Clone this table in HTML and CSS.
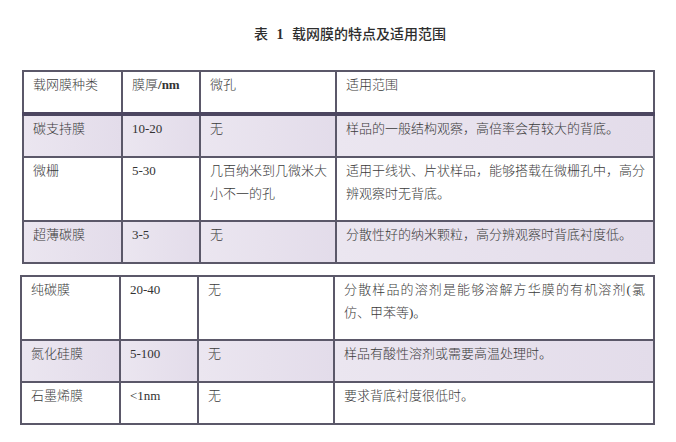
FILE: index.html
```html
<!DOCTYPE html>
<html lang="zh-CN">
<head>
<meta charset="utf-8">
<title>表 1 载网膜的特点及适用范围</title>
<link rel="stylesheet" href="styles.css">
</head>
<body>
<div class="page">
  <h1 class="title">表 <b class="num">1</b> 载网膜的特点及适用范围</h1>

  <table class="grid grid-a">
    <colgroup><col class="c1"><col class="c2"><col class="c3"><col class="c4"></colgroup>
    <tr class="head">
      <td>载网膜种类</td>
      <td>膜厚<b class="lat">/nm</b></td>
      <td>微孔</td>
      <td>适用范围</td>
    </tr>
    <tr class="shade r42">
      <td>碳支持膜</td>
      <td class="lat">10-20</td>
      <td>无</td>
      <td>样品的一般结构观察，高倍率会有较大的背底。</td>
    </tr>
    <tr class="r65">
      <td>微栅</td>
      <td class="lat">5-30</td>
      <td>几百纳米到几微米大<br>小不一的孔</td>
      <td>适用于线状、片状样品，能够搭载在微栅孔中，高分<br>辨观察时无背底。</td>
    </tr>
    <tr class="shade r42">
      <td>超薄碳膜</td>
      <td class="lat">3-5</td>
      <td>无</td>
      <td>分散性好的纳米颗粒，高分辨观察时背底衬度低。</td>
    </tr>
  </table>

  <table class="grid grid-b">
    <colgroup><col class="c1"><col class="c2"><col class="c3"><col class="c4"></colgroup>
    <tr class="r65">
      <td>纯碳膜</td>
      <td class="lat">20-40</td>
      <td>无</td>
      <td><span class="jline">分散样品的溶剂是能够溶解方华膜的有机溶剂(氯</span>仿、甲苯等)。</td>
    </tr>
    <tr class="shade r42">
      <td>氮化硅膜</td>
      <td class="lat">5-100</td>
      <td>无</td>
      <td>样品有酸性溶剂或需要高温处理时。</td>
    </tr>
    <tr class="r42">
      <td>石墨烯膜</td>
      <td class="lat">&lt;1nm</td>
      <td>无</td>
      <td>要求背底衬度很低时。</td>
    </tr>
  </table>
</div>
</body>
</html>
```

FILE: styles.css
```css
html, body {
  margin: 0;
  padding: 0;
  background: #ffffff;
}

body {
  font-family: "Liberation Serif", "Noto Sans CJK SC", serif;
  color: #3a3a3a;
}

.page {
  width: 676px;
  height: 442px;
  overflow: hidden;
}

.title {
  margin: 0;
  height: 70px;
  line-height: 70px;
  padding-left: 24px;
  text-align: center;
  font-size: 14px;
  font-weight: 500;
  color: #2e2e2e;
  word-spacing: 5px;
}

.title .num {
  font-family: "Liberation Serif", serif;
  font-weight: 700;
  font-size: 14px;
}

.grid {
  border-collapse: collapse;
  table-layout: fixed;
  font-size: 13px;
  line-height: 23px;
}

.grid-a {
  margin-left: 22px;
  width: 633px;
}

.grid-b {
  margin-left: 20px;
  margin-top: 11px;
  width: 635px;
}

.c1 { width: 99px; }
.c2 { width: 78px; }
.c3 { width: 136px; }
.c4 { width: auto; }

.grid td {
  border: 2px solid #5b5869;
  padding: 1px 8px 0 9px;
  vertical-align: top;
  font-weight: 300;
  white-space: nowrap;
}

.grid .head td {
  height: 39px;
  border-bottom: 4px solid #4c4660;
  background: #ffffff;
}

.grid .r42 td { height: 39px; }
.grid .r65 td { height: 61px; }

.grid .shade td {
  background: linear-gradient(90deg, #ebe6f0 0%, #e3dcea 100%);
}

.lat {
  font-family: "Liberation Serif", serif;
  color: #333333;
}

b.lat {
  font-weight: 700;
}

.jline {
  display: block;
  white-space: normal;
  text-align: justify;
  text-align-last: justify;
}
```
